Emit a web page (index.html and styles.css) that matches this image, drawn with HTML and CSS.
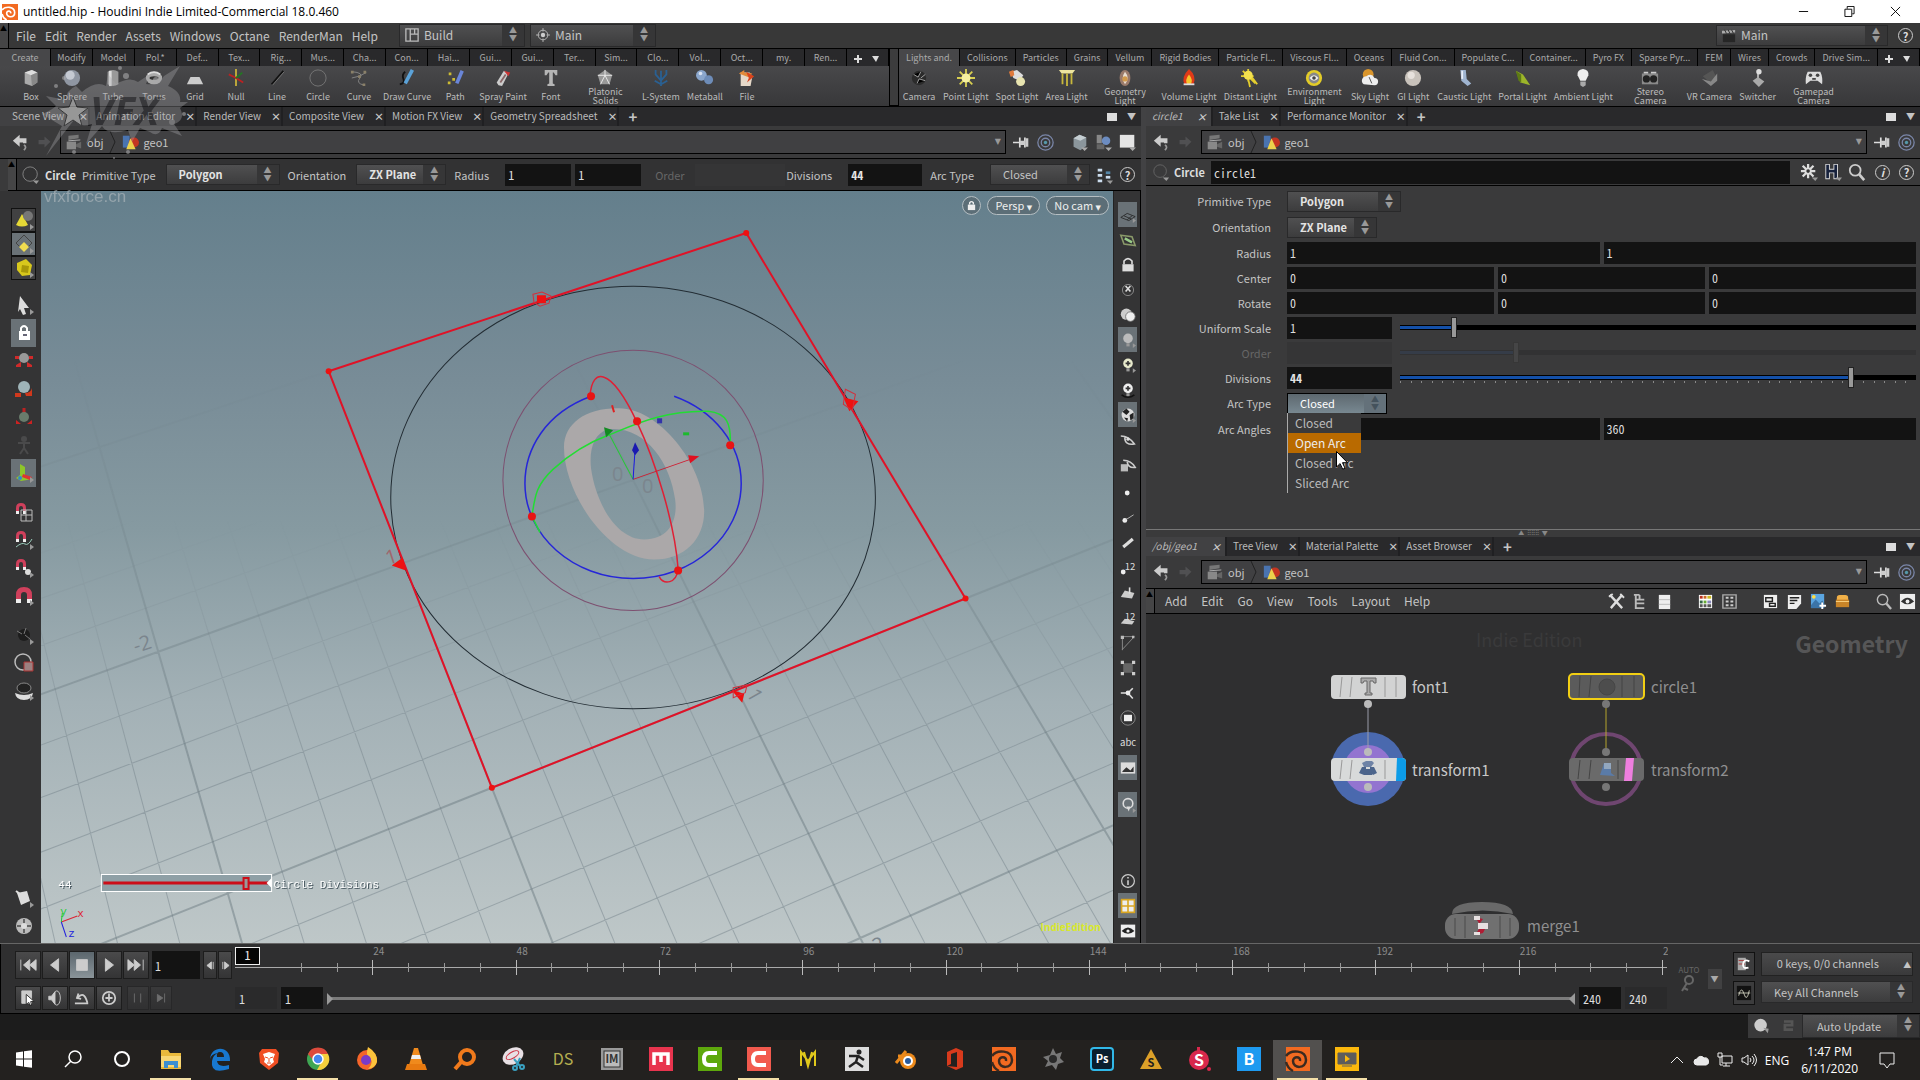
FILE: index.html
```html
<!DOCTYPE html>
<html lang="en">
<head>
  <meta charset="UTF-8">
  <title>untitled.hip - Houdini Indie Limited-Commercial 18.0.460</title>
  <meta name="viewport" content="width=device-width, initial-scale=1.0">
  <link rel="stylesheet" href="styles.css">
</head>
<body>
  <header class="titlebar">
    <svg class="app-logo" viewBox="0 0 24 24"><rect width="24" height="24" fill="#f26a21"/><path d="M0 9C5 3 19 3 19 13c0 8-12 8-12 1 0-5 7-4 6 0M0 15c1 4 3 7 7 9" fill="none" stroke="#fff" stroke-width="2.5"/></svg>
    <h1>untitled.hip - Houdini Indie Limited-Commercial 18.0.460</h1>
    <div class="window-buttons">
      <button aria-label="Minimize"><svg viewBox="0 0 12 12"><path d="M1 6h10"/></svg></button>
      <button aria-label="Restore"><svg viewBox="0 0 12 12"><path d="M1 3.500h7.500v8H1zM3.500 3V.5H11v8H9"/></svg></button>
      <button aria-label="Close"><svg viewBox="0 0 12 12"><path d="M1 1l10 10M11 1L1 11"/></svg></button>
    </div>
  </header>

  <nav class="menubar">
    <span class="grip">▲</span>
    <div class="menus">
      <button>File</button><button>Edit</button><button>Render</button><button>Assets</button><button>Windows</button><button>Octane</button><button>RenderMan</button><button>Help</button>
    </div>
    <div class="drop desk has-icon">
      <svg class="lead" viewBox="0 0 16 16"><path d="M1 1h14v14H1zM6 1v14M6 7h9M11 1v6" fill="none" stroke="#bbb" stroke-width="1.500"/></svg>
      <select aria-label="Desktop"><option>Build</option></select>
    </div>
    <div class="drop desk has-icon">
      <svg class="lead" viewBox="0 0 16 16"><circle cx="8" cy="8" r="5.500" fill="none" stroke="#bbb"/><circle cx="8" cy="8" r="2.500" fill="#ccc"/><path d="M8 0v4M8 12v4M0 8h4M12 8h4" stroke="#bbb"/></svg>
      <select aria-label="Radial menu"><option>Main</option></select>
    </div>
    <div class="drop take has-icon">
      <svg class="lead" viewBox="0 0 16 16"><path d="M1 6h14v9H1z" fill="#262626"/><path d="M0 2l15-1v3L0 5z" fill="#aaa"/><path d="M3 1l2 4M7 1l2 4M11 1l2 4" stroke="#222"/></svg>
      <select aria-label="Take"><option>Main</option></select>
    </div>
    <button class="round">?</button>
  </nav>

  <section class="shelves">
    <div class="shelf shelf-left">
      <div class="shelf-tabs" id="tabs-left"></div>
      <div class="tools" id="tools-left"></div>
    </div>
    <div class="shelf-split"></div>
    <div class="shelf shelf-right">
      <div class="shelf-tabs" id="tabs-right"></div>
      <div class="tools" id="tools-right"></div>
    </div>
  </section>

  <main class="panes">
    <section class="pane scene">
      <div class="pane-tabs" data-tabs="Scene View|Animation Editor|Render View|Composite View|Motion FX View|Geometry Spreadsheet"></div>
      <div class="path-bar" data-extra="1"></div>
      <form class="op-bar">
        <span class="grip">▲</span>
        <svg class="op-icon" viewBox="0 0 20 20"><circle cx="9" cy="9" r="8" fill="none" stroke="#888"/><path d="M12 16h7l-3 4z" fill="#999"/></svg>
        <b>Circle</b>
        <label for="bar-prim">Primitive Type</label>
        <div class="drop w114 strong"><select id="bar-prim"><option>Polygon</option></select></div>
        <label for="bar-ori">Orientation</label>
        <div class="drop w90 strong"><select id="bar-ori"><option>ZX Plane</option></select></div>
        <label for="bar-rad" class="roomy">Radius</label>
        <input id="bar-rad" class="w66" value="1"><input class="w66" aria-label="Radius y" value="1">
        <label class="off" for="bar-order">Order</label>
        <input id="bar-order" class="w90 blank" disabled>
        <label for="bar-div" class="push roomy">Divisions</label>
        <input id="bar-div" class="w74 strong" value="44">
        <label for="bar-arc" class="roomy">Arc Type</label>
        <div class="drop w100"><select id="bar-arc"><option>Closed</option></select></div>
        <svg class="op-icon" viewBox="0 0 20 20"><path d="M3 3h5v3H3zM3 9h5v3H3zM3 15h5v3H3z" fill="#cde"/><path d="M12 6h5v3h-5z" fill="#58a"/><path d="M12 11h5v3h-5z" fill="#cde"/><path d="M13 16h7l-3 4z" fill="#999"/></svg>
        <button type="button" class="round">?</button>
      </form>

      <div class="view-wrap">
        <div class="side-tools" id="side-left"></div>
        <div class="viewport">
          <svg class="canvas" viewBox="41 192 1072 751" preserveAspectRatio="xMidYMid slice">
            <defs>
              <linearGradient id="fadeMinor" x1="0" y1="520" x2="0" y2="760" gradientUnits="userSpaceOnUse"><stop offset="0" stop-color="#000"/><stop offset="1" stop-color="#fff"/></linearGradient>
              <linearGradient id="fadeMajor" x1="0" y1="360" x2="0" y2="760" gradientUnits="userSpaceOnUse"><stop offset="0" stop-color="#000"/><stop offset="1" stop-color="#fff"/></linearGradient>
              <mask id="maskMinor" maskUnits="userSpaceOnUse" x="41" y="192" width="1072" height="751"><rect x="41" y="192" width="1072" height="751" fill="url(#fadeMinor)"/></mask>
              <mask id="maskMajor" maskUnits="userSpaceOnUse" x="41" y="192" width="1072" height="751"><rect x="41" y="192" width="1072" height="751" fill="url(#fadeMajor)"/></mask>
            </defs>
            <g mask="url(#maskMinor)"><path id="grid-minor" stroke="#75848b" stroke-opacity=".5" fill="none"/></g>
            <g mask="url(#maskMajor)"><path id="grid-major" stroke="#66757c" stroke-opacity=".45" stroke-width="2" fill="none"/></g>
            <g class="axis-num">
              <text x="134" y="652" transform="rotate(-18 140 645)">-2</text>
              <text x="386" y="564" fill="#a0666c" transform="rotate(-18 393 558)">1</text>
              <text x="612" y="482">0</text><text x="642" y="494">0</text>
              <text x="748" y="702" transform="rotate(60 754 696)">1</text>
              <text x="872" y="952" transform="rotate(-18 877 945)">2</text>
            </g>

            <!-- letter mesh -->
            <path fill="#aba8a9" fill-rule="evenodd" d="M617 409c40-2 87 55 87 103 0 28-20 48-50 48-45 0-90-65-90-112 0-24 22-39 53-39zM608 430c-14 4-19 20-17 39 5 36 26 71 53 71 24 0 34-18 31-40-5-38-31-74-67-70z"/>

            <!-- circle geometry and bounds -->
            <ellipse cx="633" cy="498" rx="242" ry="211" fill="none" stroke="#222c33"/>
            <path d="M329 372L746 234 965 599 492 788z" fill="none" stroke="#e01227" stroke-width="2"/>
            <g fill="#ee1111"><circle cx="329" cy="372" r="3"/><circle cx="746" cy="234" r="3"/><circle cx="965" cy="599" r="3"/><circle cx="492" cy="788" r="3"/>
              <path d="M392 566l11-8 3 13zM843 398l15 4-9 10zM731 690l13 4-2 9zM537 296h9v8h-9z"/></g>
            <path d="M845 390l10 5-3 16-9-6zM733 688l14-3-2 8-12 5zM533 295l9-2 9 4-2 7-9 3-6-4z" fill="none" stroke="#d2303c"/>

            <!-- rotate and translate handles -->
            <circle cx="633" cy="481" r="130" fill="none" stroke="#7d5070"/>
            <path d="M591 397C545 414 525 450 525 484c0 52 48 95 108 95s108-43 108-95c0-40-28-73-67-87" fill="none" stroke="#2626d8" stroke-width="1.500"/>
            <path d="M540 533l-8-16c3-22 5-32 21-47 20-18 36-27 55-34 25-10 55-25 100-24 19 2 23 12 22 34" fill="none" stroke="#22dd33" stroke-width="1.500"/>
            <path d="M590 397c1-16 7-22 14-19 12 4 24 26 33 45 18 38 38 102 41 147-2 14-14 16-19 7" fill="none" stroke="#df2035" stroke-width="1.500"/>
            <path d="M633 480l60-21" stroke="#d01c30"/><path d="M688 456l11 1-9 7z" fill="#e01020"/>
            <path d="M633 480l-26-49" stroke="#22cc33"/><path d="M604 428l9 3-7 7z" fill="#128a22"/>
            <path d="M633 480l2-30" stroke="#1a1ae0"/><path d="M635 443l4 8-4 5-3-5z" fill="#1a1ab0"/>
            <path d="M612 406l2 7" stroke="#dd2222" stroke-width="2"/><path d="M657 419h5v5h-5z" fill="#33a" /><path d="M683 433h6v3h-6z" fill="#1cba2c"/>
            <g fill="#e81414"><circle cx="591" cy="397" r="4"/><circle cx="637" cy="422" r="4"/><circle cx="730" cy="446" r="4"/><circle cx="532" cy="517" r="4"/><circle cx="678" cy="571" r="4"/></g>

            <!-- slider readout -->
            <g class="hud">
              <text x="59" y="888">44</text>
              <path d="M102 874.500h170v17H102z" fill="#8fa0a6" stroke="#fff"/>
              <path d="M104 883h166" stroke="#cc0d18" stroke-width="3"/>
              <path d="M244 878h5v11h-5z" fill="#999" stroke="#cc0d18" stroke-width="2"/>
              <path d="M267 883l5-5v10z" fill="#fff"/>
              <text x="274" y="888">Circle Divisions</text>
            </g>
            <path d="M62 922l16-6" stroke="#d23"/><path d="M62 922l1-9" stroke="#2c3"/><path d="M62 922l5 15" stroke="#22d"/>
            <g class="gnomon"><text x="78" y="917" fill="#d23">x</text><text x="61" y="915" fill="#2c3">y</text><text x="69" y="937" fill="#22d">z</text></g>
            <text x="1040" y="931" class="edition">IndieEdition</text>
          </svg>
          <div class="pills">
            <button class="round" aria-label="Lock camera"><svg viewBox="0 0 12 12"><path d="M2 5h8v6H2z" fill="#eee"/><path d="M4 5V3q2-2.500 4 0v2" fill="none" stroke="#eee" stroke-width="1.500"/></svg></button>
            <button>Persp <i>▼</i></button>
            <button>No cam <i>▼</i></button>
          </div>
        </div>
        <div class="side-tools right" id="side-right"></div>
      </div>
    </section>

    <section class="pane side">
      <div class="pane-tabs" data-tabs="circle1|Take List|Performance Monitor"></div>
      <div class="path-bar"></div>
      <form class="params">
        <div class="param-head">
          <svg class="op-icon" viewBox="0 0 20 20"><circle cx="9" cy="9" r="7" fill="none" stroke="#666"/><path d="M12 16h7l-3 4z" fill="#999"/></svg>
          <label for="op-name"><b>Circle</b></label>
          <input id="op-name" value="circle1">
          <svg viewBox="0 0 20 20"><path d="M9 1v16M1 9h16M3 3l12 12M15 3L3 15" stroke="#ddd" stroke-width="2.500"/><circle cx="9" cy="9" r="4" fill="#ddd"/><circle cx="9" cy="9" r="2" fill="#333"/><path d="M13 16h7l-3 4z" fill="#999"/></svg>
          <svg viewBox="0 0 20 20"><path d="M4 1v17M13 1v17M4 9h9" stroke="#ddd" stroke-width="5"/><path d="M4 2v15M13 2v15M4 9h9" stroke="#16213c" stroke-width="3"/><path d="M13 16h7l-3 4z" fill="#999"/></svg>
          <svg viewBox="0 0 20 20"><circle cx="8" cy="8" r="6" fill="none" stroke="#ccc" stroke-width="2"/><path d="M12 12l6 7" stroke="#ccc" stroke-width="3"/></svg>
          <button type="button" class="round"><em>i</em></button>
          <button type="button" class="round">?</button>
        </div>
        <div class="row tall"><label for="p-prim">Primitive Type</label><div class="drop w114 strong"><select id="p-prim"><option>Polygon</option></select></div></div>
        <div class="row tall"><label for="p-ori">Orientation</label><div class="drop w90 strong"><select id="p-ori"><option>ZX Plane</option></select></div></div>
        <div class="row"><label for="p-rad">Radius</label><input id="p-rad" value="1"><input aria-label="Radius y" value="1"></div>
        <div class="row"><label for="p-cen">Center</label><input id="p-cen" value="0"><input aria-label="Center y" value="0"><input aria-label="Center z" value="0"></div>
        <div class="row"><label for="p-rot">Rotate</label><input id="p-rot" value="0"><input aria-label="Rotate y" value="0"><input aria-label="Rotate z" value="0"></div>
        <div class="row slide"><label for="p-scale">Uniform Scale</label><input id="p-scale" value="1"><input type="range" aria-label="Uniform scale slider" min="0" max="10" value="1"></div>
        <div class="row slide off"><label for="p-order">Order</label><input id="p-order" disabled><input type="range" aria-label="Order slider" min="2" max="11" value="4" disabled></div>
        <div class="row slide"><label for="p-div">Divisions</label><input id="p-div" class="strong" value="44"><input type="range" class="ticked" aria-label="Divisions slider" min="1" max="50" value="44"></div>
        <div class="row tall">
          <label for="p-arc">Arc Type</label>
          <div class="drop w100 open"><select id="p-arc"><option>Closed</option></select>
            <ul class="popup">
              <li><button type="button">Closed</button></li>
              <li><button type="button" class="hot">Open Arc</button></li>
              <li><button type="button">Closed Arc</button></li>
              <li><button type="button">Sliced Arc</button></li>
            </ul>
            <svg class="cursor" viewBox="0 0 12 19"><path d="M.5.500v15.500l3.600-3.400 2.600 5.600 2.300-1-2.500-5.500h5z" fill="#fff" stroke="#000"/></svg>
          </div>
        </div>
        <div class="row"><label for="p-ang">Arc Angles</label><input id="p-ang" value=""><input aria-label="Arc end" value="360"></div>
      </form>

      <div class="splitter">▲&nbsp; ⠿⠿⠿ &nbsp;▼</div>
      <div class="pane-tabs" data-tabs="/obj/geo1|Tree View|Material Palette|Asset Browser"></div>
      <div class="path-bar"></div>
      <nav class="net-menu">
        <span class="grip">▲</span>
        <div class="menus"><button>Add</button><button>Edit</button><button>Go</button><button>View</button><button>Tools</button><button>Layout</button><button>Help</button></div>
        <div class="net-icons">
          <svg viewBox="0 0 18 18"><path d="M2 2l13 14M15 2L3 16" stroke="#ddd" stroke-width="2.500"/><path d="M1 4l4-3M13 1l4 4" stroke="#ddd" stroke-width="2"/></svg>
          <svg viewBox="0 0 18 18"><path d="M2 2h6M4 2v14h9M4 7h9M4 11h9M8 2v4" stroke="#bbb" stroke-width="2" fill="none"/></svg>
          <svg viewBox="0 0 18 18"><path d="M3 2h12v15H3z" fill="#eee"/><path d="M3 7h12M3 12h12" stroke="#bbb"/></svg>
          <svg class="sep" viewBox="0 0 18 18"><path d="M2 2h14v14H2z" fill="#fff"/><path d="M3 3h3v3H3z" fill="#b32"/><path d="M7 3h3v3H7z" fill="#c62"/><path d="M11 3h4v3h-4z" fill="#cb2"/><path d="M3 8h3v3H3z" fill="#364"/><path d="M7 8h3v3H7z" fill="#6a3"/><path d="M11 8h4v3h-4z" fill="#88b"/><path d="M3 12h3v3H3zM7 12h3v3H7zM11 12h4v3h-4z" fill="#555"/></svg>
          <svg viewBox="0 0 18 18"><path d="M2 2h14v14H2z" fill="none" stroke="#aaa" stroke-width="1.500"/><path d="M5 5h3M10 5h3M5 9h3M10 9h3M5 13h3M10 13h3" stroke="#ccc" stroke-width="2"/></svg>
          <svg class="sep" viewBox="0 0 18 18"><path d="M2 2h14v14H2z" fill="#eee"/><path d="M4 5h7v4H4zM8 11h6v3H8z" fill="#eee" stroke="#222" stroke-width="1.500"/></svg>
          <svg viewBox="0 0 18 18"><path d="M2 2h14v9l-5 6H2z" fill="#eee"/><path d="M4 5h10M4 8h8M4 11h5" stroke="#222" stroke-width="1.500"/></svg>
          <svg viewBox="0 0 18 18"><path d="M1 1h14v15H1z" fill="#5ba5e0"/><path d="M1 13l5-6 4 4 3-3 2 3v5H1z" fill="#3b74a8"/><circle cx="4" cy="4" r="2" fill="#fd4"/><path d="M13 10v7M10 13.500h7" stroke="#fff" stroke-width="2"/></svg>
          <svg viewBox="0 0 18 18"><path d="M3 5q0-3 3-3h6q3 0 3 3v3H3z" fill="#f0b048"/><path d="M2 7h14v8H2z" fill="#c88428"/><path d="M2 9h14" stroke="#f8d080"/></svg>
          <svg class="sep" viewBox="0 0 18 18"><circle cx="8" cy="7" r="5.500" fill="none" stroke="#bbb" stroke-width="1.500"/><path d="M12 11l5 6" stroke="#bbb" stroke-width="2.500"/></svg>
          <svg viewBox="0 0 18 18"><path d="M1 1h16v16H1z" fill="#eee"/><path d="M2 9q7-8 14 0q-7 6-14 0z" fill="#333"/><circle cx="9" cy="9" r="2" fill="#eee"/></svg>
        </div>
      </nav>
      <div class="network">
        <svg viewBox="1146 614 774 329" preserveAspectRatio="xMinYMin slice">
          <text x="1476" y="647" class="ghost">Indie Edition</text>
          <text x="1908" y="653" text-anchor="end" class="context">Geometry</text>
          <circle cx="1368" cy="769" r="37" fill="#4a69ae"/><circle cx="1368" cy="769" r="24" fill="#9374d0"/>
          <circle cx="1606" cy="769" r="35" fill="none" stroke="#6f4670" stroke-width="4"/>
          <path d="M1368 706v45" stroke="#9a9ca8"/><path d="M1606 706v45" stroke="#b5a42c"/>
          <g fill="#bbb"><circle cx="1368" cy="704" r="4"/><circle cx="1368" cy="752" r="4"/><circle cx="1368" cy="787" r="4"/></g>
          <g fill="#777"><circle cx="1606" cy="704" r="4"/><circle cx="1606" cy="752" r="4"/><circle cx="1606" cy="787" r="4"/></g>
          <rect x="1331" y="675" width="75" height="24" rx="4" fill="#d2d3d3"/>
          <rect x="1331" y="758" width="75" height="23" rx="4" fill="#d8dada"/><path d="M1397 758h5q4 0 4 4v15q0 4-4 4h-6z" fill="#0c9ce8"/>
          <rect x="1569" y="674" width="75" height="25" rx="4" fill="#5b5b5b" stroke="#f2cf13" stroke-width="2"/>
          <rect x="1569" y="758" width="75" height="23" rx="4" fill="#6a6a6a"/><path d="M1626 758h8l-2 23h-8z" fill="#ee7fdf"/>
          <g stroke="#999" fill="none"><path d="M1342 677l-2 20M1352 677l-2 20M1385 677v20M1396 677v20M1342 760l-2 19M1352 760l-2 19M1385 760v19"/></g>
          <g stroke="#444" fill="none"><path d="M1580 676l-1 21M1591 676l-2 21M1622 676v21M1634 676v21M1580 760l-2 19M1591 760l-2 19M1618 760v19"/></g>
          <path d="M1361 678h15v5h-2l-1-2h-3v12h2v2h-7v-2h2v-12h-3l-1 2h-2z" fill="#aaa" stroke="#666"/>
          <circle cx="1607" cy="687" r="8" fill="#4d4d4d" stroke="#464646"/>
          <path d="M1359 773l3-6h4v5l-2 3zM1370 767h4l3 6-4 2-3-3zM1364 769h8v6h-8z" fill="#4c658c"/><path d="M1362 763l4-2h6l2 2-3 4h-7z" fill="#6e83a6"/>
          <path d="M1600 775l4-12 7 1v9l4 3z" fill="#5a7ba8"/><path d="M1604 763h7v6h-7z" fill="#93a7be"/>
          <path d="M1452 914q0-12 30-12t31 12q-30-7-61 0z" fill="#696969"/>
          <rect x="1445" y="914" width="74" height="25" rx="11" fill="#707070"/>
          <path d="M1455 918v18M1465 916v22M1500 916v22M1510 918v18" stroke="#4a4a4a"/>
          <path d="M1475 917l8 2-3 4 6 4-3 6-8 2 6-9z" fill="#b01c34"/><path d="M1474 916h6v4h-6zM1478 923h10v6h-10zM1474 932h6v3h-6z" fill="#e6e0e0"/>
          <g class="node-name"><text x="1412" y="693">font1</text><text x="1412" y="776">transform1</text></g>
          <g class="node-name dim"><text x="1651" y="693">circle1</text><text x="1651" y="776">transform2</text><text x="1527" y="932">merge1</text></g>
        </svg>
      </div>
    </section>
  </main>

  <footer class="playbar">
    <div class="play-left">
      <div class="btn-row">
        <button aria-label="First frame"><svg viewBox="0 0 20 14"><path d="M2 1v12M12 1v12L5 7zM19 1v12l-7-6z"/></svg></button>
        <button aria-label="Play backward"><svg viewBox="0 0 20 14"><path d="M14 0v14L5 7z"/></svg></button>
        <button aria-label="Stop" class="lit"><svg viewBox="0 0 20 14"><path d="M4 1h12v12H4z"/></svg></button>
        <button aria-label="Play"><svg viewBox="0 0 20 14"><path d="M6 0v14l9-7z"/></svg></button>
        <button aria-label="Last frame"><svg viewBox="0 0 20 14"><path d="M18 1v12M8 1v12l7-6zM1 1v12l7-6z"/></svg></button>
        <input class="frame" aria-label="Frame" value="1">
        <button class="thin" aria-label="Previous frame"><svg viewBox="0 0 10 10"><path d="M6 1v8L1 5zM8 1v8"/></svg></button>
        <button class="thin" aria-label="Next frame"><svg viewBox="0 0 10 10"><path d="M4 1v8l5-4zM2 1v8"/></svg></button>
      </div>
      <div class="btn-row low">
        <button aria-label="Global animation options"><svg viewBox="0 0 20 18"><path d="M3 1h11v14H3z"/><path d="M8 5l9 8h-4l1 4h-2l-1-3-3 2z" fill="#fff" stroke="#222"/></svg></button>
        <button aria-label="Audio"><svg viewBox="0 0 20 18"><path d="M3 7h3l4-5v14l-4-5H3z"/><ellipse cx="12" cy="9" rx="4" ry="8" fill="none"/></svg></button>
        <button aria-label="Loop mode"><svg viewBox="0 0 20 18"><path d="M2 15h15M4 10l2-6M4 9l5 1M5 9q7-9 11 5" fill="none" stroke-width="2"/></svg></button>
        <button aria-label="Real time"><svg viewBox="0 0 20 18"><circle cx="10" cy="9" r="7" fill="none" stroke-width="2"/><path d="M10 4v5h4M6 9h3M10 10v3" fill="none" stroke-width="2"/></svg></button>
        <button class="mid off" aria-label="Previous key" disabled><svg viewBox="0 0 20 14"><path d="M6 2v10M13 2v10"/></svg></button>
        <button class="off" aria-label="Next key" disabled><svg viewBox="0 0 20 14"><path d="M14 2v10M6 3l6 4-6 4z"/></svg></button>
      </div>
    </div>
    <div class="play-mid">
      <div class="timeline" id="timeline"><output class="flag">1</output></div>
      <div class="range-row">
        <input class="w42 flat" aria-label="Global start" value="1">
        <input class="w42" aria-label="Range start" value="1">
        <div class="range-track"></div>
        <input class="w42" aria-label="Range end" value="240">
        <input class="w42 flat" aria-label="Global end" value="240">
      </div>
    </div>
    <div class="autokey">
      <span>AUTO<svg viewBox="0 0 18 18"><circle cx="11" cy="5" r="4" fill="none" stroke="#666" stroke-width="2"/><path d="M9 8l-5 8M6 13l4 2" stroke="#666" stroke-width="2"/></svg></span>
      <button aria-label="Auto key menu">▼</button>
    </div>
    <div class="play-right">
      <button class="sq" aria-label="Scoped channels"><svg viewBox="0 0 18 18"><path d="M2 2h9v14H2z" fill="#aaa"/><path d="M3 5h7M3 9h7" stroke="#a33"/><path d="M15 6q-6-3-7 3t6 4" fill="none" stroke="#fff" stroke-width="2"/></svg></button>
      <button class="wide">0 keys, 0/0 channels <i>▲</i></button>
      <button class="sq" aria-label="Channel list"><svg viewBox="0 0 18 18"><path d="M1 1h16v16H1z" fill="#111"/><path d="M2 9h14M3 12q3-12 6-2t6-4" fill="none" stroke="#ccb"/></svg></button>
      <div class="drop"><select aria-label="Key scope"><option>Key All Channels</option></select></div>
    </div>
  </footer>
  <div class="status">
    <svg viewBox="0 0 20 20"><circle cx="9" cy="9" r="7" fill="#ccc"/><path d="M12 12l5 6 1-5z" fill="#999"/></svg>
    <svg viewBox="0 0 20 20"><path d="M5 5h9v4H6v5h9" fill="none" stroke="#555" stroke-width="3"/></svg>
    <div class="drop"><select aria-label="Update mode"><option>Auto Update</option></select></div>
  </div>

  <nav class="taskbar">
    <div class="apps" id="apps"></div>
    <div class="tray">
      <svg viewBox="0 0 16 16"><path d="M2 11l6-6 6 6"/></svg>
      <svg viewBox="0 0 16 16"><path d="M4 13a3 3 0 0 1 0-6 4 4 0 0 1 7-1 3 3 0 0 1 2 7z" fill="#e8e8e8"/></svg>
      <svg viewBox="0 0 16 16"><path d="M5 4h10v7H5zM9 11v3M6 14h7M1 1h4v4H1zM3 5v8h3"/></svg>
      <svg viewBox="0 0 16 16"><path d="M1 6h2l4-3v10l-4-3H1zM9 6q2 2 0 4M11 4q4 4 0 8M13 2q5 6 0 12"/></svg>
      <span>ENG</span>
      <time>1:47 PM<br>6/11/2020</time>
      <svg class="note" viewBox="0 0 18 18"><path d="M2 2h14v11h-4l-3 4-3-4H2z"/></svg>
    </div>
  </nav>

  <div class="stamp">
    <svg viewBox="0 0 150 100" fill="#a9a9ab">
      <path d="M4 50q10-4 14-8l-10-10 20 4q0-10 10-14l6 6q14-12 24-6l2-12 8 10q14-8 22-2l12-8-4 10q12 2 18-8l16-10-12 20q14 6 12 16l8 0-8 6q6 12-6 16l8 12-20-8q-4 10-12 4l-10-4-8 14-4-12q-20 6-26-4l-16 18 6-20q-12 4-18-4L8 92l16-30z" opacity=".6"/>
      <circle cx="118" cy="16" r="3"/><circle cx="82" cy="4" r="2"/><circle cx="88" cy="12" r="3"/><circle cx="134" cy="58" r="3"/><circle cx="36" cy="88" r="2"/><circle cx="146" cy="50" r="2"/><circle cx="18" cy="22" r="2"/><circle cx="90" cy="88" r="2"/><circle cx="26" cy="14" r="2"/><circle cx="76" cy="94" r="1"/>
      <path d="M35 33l4 10 11 1-9 7 3 11-9-6-9 6 3-11-9-7 11-1z" fill="#d0d0d0" stroke="#333"/>
      <text x="52" y="61">VFX</text>
    </svg>
    <span>vfxforce.cn</span>
  </div>

  <script src="script.js"></script>
</body>
</html>
```

FILE: styles.css
```css
* { box-sizing: border-box; }
body {
  margin: 0;
  min-height: 100vh;
  display: flex;
  flex-direction: column;
  background: #1c1c1c;
  color: #c4c4c4;
  font: 11px/16px "Noto Sans CJK SC", "Open Sans", sans-serif;
  overflow: hidden;
}
button, input, select {
  font: inherit;
  color: inherit;
  background: none;
  border: 0;
  padding: 0;
  margin: 0;
  min-width: 0;
}
svg { display: block; flex: none; }
b { color: #ddd; }

/* window title */
.titlebar {
  height: 23px;
  display: flex;
  align-items: center;
  background: #fff;
  color: #000;
  padding: 0 12px 0 2px;
}
.app-logo { width: 16px; height: 16px; }
.titlebar h1 {
  font: 12px/20px "Open Sans", sans-serif;
  margin: 0 auto 0 5px;
}
.window-buttons { display: flex; gap: 20px; }
.window-buttons button { width: 26px; display: flex; justify-content: center; }
.window-buttons svg { width: 11px; height: 11px; fill: none; stroke: #000; }

/* main menu */
.grip {
  width: 9px;
  align-self: stretch;
  flex: none;
  font-size: 7px;
  line-height: 10px;
  color: #000;
  background: #454546;
  border-right: 1px solid #000;
}
.menubar {
  height: 25px;
  display: flex;
  align-items: center;
  background: #383838;
  padding-right: 7px;
}
.menus { display: flex; gap: 9px; margin-left: 7px; font-size: 12px; }
.drop {
  position: relative;
  height: 21px;
  flex: none;
  background: linear-gradient(#505051, #3c3c3d);
  border: 1px solid #29292a;
}
.drop select {
  appearance: none;
  display: block;
  width: 100%;
  height: 100%;
  padding: 0 24px 1px 12px;
}
.drop::after {
  content: "▲\A▼";
  white-space: pre;
  position: absolute;
  right: 0;
  top: 0;
  bottom: 0;
  width: 22px;
  padding-top: 1px;
  text-align: center;
  font-size: 8px;
  line-height: 8px;
  color: #999;
  background: #363637;
  pointer-events: none;
}
.has-icon select { padding-left: 24px; font-size: 12px; }
.lead { position: absolute; left: 5px; top: 3px; width: 14px; height: 14px; pointer-events: none; }
.desk { width: 126px; margin-left: 5px; height: 23px; }
.menus + .desk { margin-left: 21px; }
.take { width: 172px; margin: 0 10px 0 auto; }
.round {
  width: 15px;
  height: 15px;
  flex: none;
  border: 1px solid #ccc;
  border-radius: 50%;
  font: bold 11px/12px "Noto Sans CJK SC", sans-serif;
  color: #ddd;
  text-align: center;
}
.w42 { width: 42px; }
.w66 { width: 66px; }
.w74 { width: 74px; }
.w90 { width: 90px; }
.w100 { width: 100px; }
.w114 { width: 114px; }

/* shelves */
.shelves { height: 59px; display: flex; border-bottom: 1px solid #000; }
.shelf { display: flex; flex-direction: column; min-width: 0; }
.shelf-left { flex: 889; }
.shelf-right { flex: 1021; }
.shelf-split { width: 10px; border: 1px solid #000; background: #3c3c3d; }
.shelf-tabs {
  height: 18px;
  display: flex;
  background: #242426;
  border-top: 1px solid #000;
  font-size: 9px;
  line-height: 18px;
}
.shelf-tabs button {
  flex: 1 1 auto;
  padding: 0 4px;
  background: #29292b;
  border-right: 1px solid #000;
  color: #aaa;
  overflow: hidden;
  white-space: nowrap;
}
#tabs-left button { flex: 1 1 0; }
#tabs-left .on { flex: none; width: 51px; }
.shelf-tabs .on { background: #474749; }
.shelf-tabs .plus, #tabs-left .plus { flex: none; width: 42px; color: #ddd; text-align: center; }
.plus svg { display: inline-block; width: 26px; height: 10px; vertical-align: middle; }
.tools { flex: 1; display: flex; background: linear-gradient(#48484a, #38383a); overflow: hidden; }
#tools-left { padding-left: 11px; }
.tool {
  min-width: 41px;
  flex: none;
  padding: 3px 4px 0 3px;
  display: flex;
  flex-direction: column;
  align-items: center;
  font-size: 9px;
  line-height: 9px;
  color: #bbb;
}
.tool.wide { width: 67px; padding: 3px 8px 0; }
.tool svg { width: 20px; height: 18px; overflow: visible; }
.tool span { height: 18px; display: flex; align-items: center; text-align: center; }

/* panes */
.panes {
  flex: 1;
  min-height: 0;
  display: grid;
  grid-template-columns: minmax(0, 1141fr) minmax(0, 779fr);
}
.pane { display: flex; flex-direction: column; min-height: 0; background: #3a3a3b; }
.side { border-left: 5px solid #424244; }
.pane-tabs {
  height: 19px;
  flex: none;
  display: flex;
  background: #29292b;
  font-size: 10px;
  line-height: 18px;
}
.pane-tabs .tab { display: flex; padding: 0 4px 0 6px; color: #bbb; border-right: 2px solid #202022; white-space: nowrap; }
.pane-tabs .tab.on { background: #414143; padding-right: 8px; }
.scene .tab.on { padding: 0 4px 0 12px; }
.side .tab.on { font-style: italic; }
.tab button { width: 6px; margin-left: 10px; font-size: 10px; font-weight: bold; color: #ccc; }
.tab.on button { margin-left: 14px; }
.pane-tabs .add { font-size: 15px; font-weight: bold; margin-left: 9px; }
.pane-tabs .max { width: 10px; height: 8px; background: #ddd; margin: 6px 10px 0 auto; }
.pane-tabs .arr { font-size: 9px; margin-right: 5px; }
.path-bar {
  height: 33px;
  flex: none;
  display: flex;
  align-items: center;
  gap: 7px;
  padding: 0 5px 0 7px;
  border-bottom: 1px solid #000;
}
.path-bar > svg { width: 17px; height: 17px; }
.scene .path-bar { padding-left: 12px; }
.scene .target { margin-right: 10px; }
.path {
  flex: 1;
  height: 24px;
  display: flex;
  align-items: center;
  gap: 5px;
  padding: 0 4px;
  border: 1px solid #000;
  background: #404042;
}
.path svg { width: 17px; height: 17px; }
.path .sepa { width: 8px; height: 22px; }
.path i { margin-left: auto; font: 8px/8px "DejaVu Sans", sans-serif; color: #999; }

.op-bar {
  height: 32px;
  flex: none;
  display: flex;
  align-items: center;
  margin-left: 8px;
  padding-right: 6px;
  border-bottom: 1px solid #000;
  background: #323233;
}
.op-bar label { margin: 0 10px 0 8px; white-space: nowrap; }
.op-bar b { margin-right: -2px; }
.op-bar .roomy { margin-right: 16px; }
.op-bar input + input { margin-left: 4px; }
.op-bar .off { margin-left: 14px; }
.op-bar .push { margin-left: auto; }
.op-bar .op-icon { margin: 0 5px; }
.op-bar .drop + .op-icon { margin-right: 7px; }
.op-icon { width: 18px; height: 20px; }
input:not([type="range"]) {
  height: 22px;
  padding: 0 3px;
  background: #131313;
  color: #ddd;
  font: 12px/20px "Noto Sans Mono CJK SC", "Liberation Mono", monospace;
}
.op-bar input.blank, .off input:not([type="range"]) { background: #353536; }
.strong select, input.strong:not([type="range"]) { font-weight: bold; color: #e4e4e4; }
.off { color: #666; }

/* 3d view */
.view-wrap { flex: 1; min-height: 0; display: flex; }
.side-tools {
  width: 41px;
  display: flex;
  flex-direction: column;
  padding: 17px 5px 3px 11px;
  background: #343435;
}
.side-tools button { height: 28px; flex: none; display: flex; align-items: center; justify-content: center; }
.side-tools button.cell { height: 24px; border: 1px solid #111; background: #414142; }
.side-tools button.on { background: #6a7277; }
.side-tools .gap { margin-top: 11px; }
.side-tools .last { margin-top: auto; }
.side-tools svg { width: 20px; height: 20px; overflow: visible; }
.side-tools.right { width: 28px; padding: 11px 3px 0 4px; border-left: 1px solid #222; border-right: 1px solid #000; }
.side-tools.right button { height: 25px; }
.side-tools.right svg { width: 16px; height: 16px; }
.side-tools.right .gap2 { margin-top: 3px; }
.side-tools.right .gap { margin-top: 12px; }
.side-tools text { font: 12px "Noto Sans CJK SC", sans-serif; fill: #ddd; }
.viewport {
  flex: 1;
  position: relative;
  overflow: hidden;
  background: linear-gradient(#647f8c, #788c97 25%, #869aa1 45%, #a3b1b6 68%, #bec7c8);
}
.canvas { position: absolute; width: 100%; height: 100%; }
.axis-num { font: 20px "Open Sans", sans-serif; fill: #7b858d; }
.hud { font: 11px "Liberation Mono", monospace; fill: #fff; }
.hud text { filter: drop-shadow(1px 1px 0 #4a5a62); }
.gnomon { font: 11px "Liberation Mono", monospace; }
.edition { font: bold 10px "Open Sans", sans-serif; fill: #d8e82c; }
.pills { position: absolute; top: 5px; right: 4px; display: flex; gap: 6px; align-items: center; }
.pills button {
  height: 19px;
  padding: 0 7px;
  border: 1px solid #b5bec2;
  border-radius: 10px;
  background: #5c6e77;
  color: #eee;
  line-height: 15px;
}
.pills .round { width: 19px; padding: 3px; }
.pills svg { width: 11px; height: 11px; }
.pills i { font: 7px/10px "DejaVu Sans", sans-serif; }

/* parameters */
.params { display: flex; flex-direction: column; padding-bottom: 88px; }
.param-head {
  height: 27px;
  display: flex;
  align-items: center;
  gap: 6px;
  padding: 0 6px;
  border-bottom: 1px solid #000;
  margin-bottom: 2px;
}
.param-head svg { width: 18px; height: 18px; }
.param-head label { margin-left: -2px; }
.param-head input { flex: 1; height: 23px; margin-right: 4px; }
.param-head .round { margin-left: 3px; }
.row { display: flex; align-items: center; gap: 4px; height: 25px; padding-right: 4px; }
.row.tall { height: 26px; }
.row label { width: 125px; margin-right: 12px; text-align: right; flex: none; }
.row input:not([type="range"]) { flex: 1; }
.row.slide input:not([type="range"]) { flex: none; width: 105px; }
.row input[type="range"] {
  --fill: 0%;
  appearance: none;
  flex: 1;
  height: 22px;
  margin-left: 4px;
  background:
    linear-gradient(#1450a8, #1450a8) 0 9px / var(--fill) 3px no-repeat,
    linear-gradient(#000, #000) 0 8px / 100% 5px no-repeat;
}
.row input.ticked {
  background:
    linear-gradient(#1450a8, #1450a8) 0 9px / var(--fill) 3px no-repeat,
    linear-gradient(#000, #000) 0 8px / 100% 5px no-repeat,
    repeating-linear-gradient(90deg, #888 0 1px, transparent 1px calc(100% / 49)) 0 14px / 100% 2px no-repeat;
}
.row input[type="range"]::-webkit-slider-thumb {
  appearance: none;
  width: 6px;
  height: 21px;
  background: #999;
  border: 1px solid #222;
}
.row.off input[type="range"] { opacity: 0.12; }
.drop.open { background: linear-gradient(#5d686f, #788891); border-color: #000; color: #fff; }
.drop.open::after { background: #64717a; color: #44525c; }
.popup {
  position: absolute;
  z-index: 2;
  left: -1px;
  top: 19px;
  width: 74px;
  margin: 0;
  padding: 0;
  list-style: none;
  background: #3a3a3b;
  border-left: 1px solid #aaa;
}
.popup button { width: 100%; height: 20px; padding-left: 7px; text-align: left; font-size: 12px; line-height: 18px; color: #bbb; }
.popup .hot { background: #b96a00; color: #eee; }
.cursor { position: absolute; z-index: 3; left: 48px; top: 57px; width: 12px; height: 19px; }

.splitter {
  height: 8px;
  flex: none;
  border-top: 1px solid #777;
  text-align: center;
  font-size: 6px;
  line-height: 6px;
  color: #888;
}
.net-menu { height: 25px; flex: none; display: flex; align-items: center; border-bottom: 1px solid #000; }
.net-menu .menus { gap: 14px; margin-left: 10px; }
.net-icons { margin-left: auto; display: flex; gap: 7px; padding-right: 4px; }
.net-icons svg { width: 17px; height: 17px; }
.net-icons .sep { margin-left: 17px; }
.network { flex: 1; min-height: 0; background: #2f2f30; }
.network svg { width: 100%; height: 100%; }
.ghost { font-size: 18px; fill: #3a3a3b; }
.context { font-size: 23px; font-weight: bold; fill: #565657; }
.node-name { font-size: 15px; fill: #c8c8c8; }
.dim { fill: #909090; }

/* playbar */
.playbar {
  height: 71px;
  display: flex;
  padding-right: 7px;
  background: #2f2f30;
  border-top: 1px solid #666;
  border-bottom: 1px solid #000;
}
.play-left { width: 235px; flex: none; padding: 7px 0 0 14px; border-left: 1px solid #000; }
.btn-row { display: flex; gap: 1px; height: 28px; }
.btn-row.low { height: 24px; margin-top: 7px; }
.btn-row button {
  width: 26px;
  display: flex;
  align-items: center;
  justify-content: center;
  background: linear-gradient(#4a4a4b, #343435);
  border: 1px solid #1d1d1d;
}
.btn-row button.thin { width: 14px; }
.btn-row button.lit { background: linear-gradient(#5b666d, #8a9499); }
.btn-row button.off { width: 22px; opacity: 0.4; }
.btn-row .mid { margin-left: 4px; }
.btn-row svg { width: 18px; height: 16px; fill: #ccc; stroke: #ccc; }
.btn-row .thin svg { width: 9px; height: 9px; }
.btn-row .frame { width: 48px; height: 28px; margin: 0 2px; }
.play-mid { flex: 1; min-width: 0; }
.timeline { position: relative; height: 37px; margin-right: 5px; }
.timeline::before { content: ""; position: absolute; left: 0; right: -5px; top: 23px; height: 1px; background: #aaa; }
.tick { position: absolute; top: 19px; height: 9px; border-left: 1px solid #999; }
.tick.major { top: 16px; height: 15px; border-color: #bbb; }
.tick span { position: absolute; bottom: 17px; left: 0; font-size: 10px; line-height: 14px; color: #8d8d8d; }
.tick:last-child span { width: 5px; overflow: hidden; }
.flag {
  position: absolute;
  z-index: 1;
  left: 0;
  top: 3px;
  width: 25px;
  height: 18px;
  border: 1px solid #eee;
  background: #050505;
  color: #eee;
  text-align: center;
  font: 12px/14px "Noto Sans Mono CJK SC", monospace;
}
.range-row { display: flex; align-items: center; gap: 4px; padding-top: 6px; }
.range-row input.flat { background: #2a2a2b; }
.range-row input { padding-left: 4px; }
.range-track { flex: 1; height: 3px; background: #7b7b7b; position: relative; }
.range-track::before, .range-track::after {
  content: "";
  position: absolute;
  top: -4px;
  border: 6px solid transparent;
}
.range-track::before { left: 0; border-left-color: #999; border-right: 0; }
.range-track::after { right: 0; border-right-color: #999; border-left: 0; }
.autokey { width: 66px; display: flex; align-items: center; justify-content: center; gap: 8px; color: #666; font-size: 8px; line-height: 10px; }
.autokey svg { width: 18px; height: 18px; }
.autokey button { width: 14px; height: 20px; background: #414142; color: #aaa; }
.play-right {
  width: 180px;
  flex: none;
  display: grid;
  grid-template-columns: 22px 1fr;
  grid-auto-rows: 24px;
  gap: 5px 6px;
  padding-top: 8px;
}
.play-right .sq { border: 1px solid #111; background: #3c3c3d; padding: 2px; }
.play-right .sq svg { width: 16px; height: 18px; }
.play-right .wide { background: linear-gradient(#4a4a4b, #3a3a3b); border: 1px solid #222; padding-left: 14px; line-height: 20px; }
.wide i { margin-left: 22px; font-size: 8px; font-style: normal; }
.play-right .drop { height: 22px; }
.status { height: 26px; display: flex; justify-content: flex-end; }
.status svg { width: 27px; height: 24px; padding: 3px; background: #39393a; }
.status .drop { width: 118px; height: 24px; }
.status select { padding-left: 14px; }

/* windows taskbar */
.taskbar {
  height: 40px;
  display: flex;
  background: #23211f;
  color: #fff;
  font: 12px/17px "Open Sans", sans-serif;
}
.apps { display: flex; }
.apps button {
  width: 49px;
  display: flex;
  align-items: center;
  justify-content: center;
  border-bottom: 2px solid transparent;
}
.apps button:first-child { width: 48px; }
.apps .run { border-image: linear-gradient(90deg, transparent 10%, #f4e0a8 10% 90%, transparent 90%) 1; }
.apps .now { background: #52504e; }
.apps svg { width: 24px; height: 24px; overflow: visible; }
.apps text { font: 16px "Noto Sans CJK SC", sans-serif; text-anchor: middle; }
.apps .heavy { font-weight: bold; }
.apps .small { font-size: 11px; }
.tray { margin-left: auto; padding-right: 24px; display: flex; align-items: center; gap: 8px; }
.tray svg { width: 16px; height: 16px; fill: none; stroke: #eee; }
.tray time { text-align: center; margin: 0 12px 0 4px; }
.tray .note { width: 18px; height: 18px; }

/* channel stamp over the top left corner */
.stamp { position: absolute; z-index: 5; left: 38px; top: 64px; width: 150px; pointer-events: none; color: #b4bcc0; }
.stamp svg { width: 150px; height: 100px; opacity: 0.6; }
.stamp text { font: italic bold 40px "Open Sans", sans-serif; fill: #39393c; }
.stamp span { display: block; margin: 22px 0 0 6px; font: 17px/22px "Liberation Sans", sans-serif; opacity: 0.6; }
```

FILE: script.js
```js
const $ = id => document.getElementById(id);
const svg = (body, box = "0 0 20 20", cls = "") => `<svg class="${cls}" viewBox="${box}">${body}</svg>`;

// shelf icons, 20x20
const art = {
  Box: '<path d="M3 4l8-3 6 3v11l-6 4-8-3z" fill="#aaa"/><path d="M3 4l8-3 6 3-7 3z" fill="#ddd"/><path d="M10 7l7-3v11l-6 4z" fill="#888"/>',
  Sphere: '<circle cx="10" cy="10" r="9" fill="#8f96a2"/><circle cx="8" cy="7" r="5" fill="#c4c9d2"/>',
  Tube: '<path d="M4 3q6-4 12 0v14q-6 4-12 0z" fill="#999"/><path d="M7 2v17" stroke="#ddd" stroke-width="3"/>',
  Torus: '<ellipse cx="10" cy="10" rx="9" ry="7" fill="#aaa"/><ellipse cx="10" cy="10" rx="5" ry="2" fill="#333"/><path d="M3 6q7-5 14 0" stroke="#ddd" stroke-width="2" fill="none"/>',
  Grid: '<path d="M5 9h10l4 8H1z" fill="#ccc"/>',
  Null: '<path d="M10 0v19" stroke="#c9b13a" stroke-width="2"/><path d="M2 6l8 4 8 5" stroke="#b22" stroke-width="2"/><path d="M10 10l7-6" stroke="#272" stroke-width="2"/>',
  Line: '<path d="M4 17L17 2" stroke="#111" stroke-width="2"/><path d="M5 18L18 3" stroke="#777"/>',
  Circle: '<circle cx="10" cy="10" r="9" fill="none" stroke="#777"/>',
  Curve: '<path d="M2 3q14 1 9 7t5 8M2 10l8-2 8-4" stroke="#888" fill="none"/><path d="M1 2h3v3H1zM15 2h3v3h-3zM9 7h3v3H9zM14 16h3v3h-3z" fill="#8a8068"/>',
  "Draw Curve": '<path d="M8 3Q4 6 6 11t-4 6" stroke="#111" stroke-width="2" fill="none"/><path d="M16 1L8 16" stroke="#5ba2d8" stroke-width="4"/>',
  Path: '<path d="M3 4h3v3H3zM7 10h3v3H7zM2 14h3v3H2z" fill="#cb3"/><path d="M18 2l-6 14" stroke="#6a86d8" stroke-width="4"/>',
  "Spray Paint": '<path d="M5 18l-2-3L11 2l5 3-7 14z" fill="#ccc"/><path d="M11 2l7 2-2 4z" fill="#c33"/><path d="M7 15l6-9" stroke="#866" stroke-width="2"/>',
  Font: '<path d="M3 1h14v6h-2l-2-3h-1v12l2 1v2H6v-2l2-1V4H7L5 7H3z" fill="#b5b5b5"/>',
  "Platonic Solids": '<path d="M10 1l8 6-3 10H5L2 7z" fill="#999"/><path d="M10 1v6L5 17M10 7l8 0M10 7L2 7M10 7l5 10" stroke="#eee" fill="none"/>',
  "L-System": '<path d="M10 19V2M10 13L4 6V1M10 13l6-7V1M10 17l-7-4M10 17l7-4" stroke="#2a6092" stroke-width="2" fill="none"/>',
  Metaball: '<circle cx="6" cy="7" r="6" fill="#8aa6cc"/><circle cx="14" cy="12" r="5" fill="#6d8cb8"/><circle cx="5" cy="5" r="2" fill="#d8e2f2"/>',
  File: '<path d="M3 4h10l3 4-2 11H3z" fill="#e6d8c8"/><path d="M1 5l6-4v3l9 1-5 4z" fill="#e28a3a"/><path d="M9 3l9 5-8 7 2-5z" fill="#d9431c"/>',
  Camera: '<circle cx="10" cy="10" r="8" fill="#2b2b2b"/><path d="M4 6l5 3 3-6M8 16l2-5 7 2M12 10l5-4" stroke="#aaa"/>',
  "Point Light": '<path d="M10 0v20M0 10h20M3 3l14 14M17 3L3 17" stroke="#d8cf50" stroke-width="2"/><circle cx="10" cy="10" r="5" fill="#f5f0a0"/>',
  "Spot Light": '<path d="M3 3l7-2 7 6-4 6-7-3z" fill="#ddd"/><path d="M1 3l5-2 1 6-4 2z" fill="#e07a3c"/><circle cx="14" cy="14" r="5" fill="#e8e4b0"/>',
  "Area Light": '<path d="M1 1h18l-3 4H4z" fill="#eee6a0"/><path d="M5 5v12M10 5v14M15 5v12" stroke="#c8b83c" stroke-width="2"/>',
  "Geometry Light": '<ellipse cx="10" cy="10" rx="6" ry="9" fill="#9a7a6a"/><path d="M10 3q6 7 0 14q-5-7 0-14z" fill="#e8ddd0"/><circle cx="10" cy="11" r="3" fill="#d29a4c"/>',
  "Volume Light": '<path d="M10 0q9 8 5 17H5Q1 9 10 0z" fill="#e03a18"/><path d="M10 6q5 6 2 11H8q-3-5 2-11z" fill="#f6c52c"/><path d="M4 17h12" stroke="#ddd" stroke-width="2"/>',
  "Distant Light": '<path d="M2 2l14 14M8 0v14M0 8h14M12 9l6 8M8 11l2 9" stroke="#e5cf2e" stroke-width="2"/><circle cx="8" cy="7" r="5" fill="#f3e14e"/>',
  "Environment Light": '<circle cx="10" cy="10" r="9" fill="#e3cc28"/><circle cx="10" cy="10" r="6" fill="#888"/><path d="M5 10q5-6 10 0q-5 6-10 0z" fill="#eee"/><circle cx="10" cy="10" r="2" fill="#444"/>',
  "Sky Light": '<circle cx="8" cy="6" r="6" fill="#d9952c"/><path d="M3 17a5 5 0 0 1 3-9q6-4 9 2a4 4 0 0 1 0 8z" fill="#eee"/><path d="M9 9l3 7" stroke="#444"/>',
  "GI Light": '<ellipse cx="10" cy="10" rx="9" ry="9" fill="#c8c2bb"/><circle cx="8" cy="7" r="4" fill="#e6e1dc"/>',
  "Caustic Light": '<path d="M6 1h6l1 10 5 5-4 3-7-6z" fill="#9fb4d0"/><path d="M8 2v9" stroke="#e8eef8" stroke-width="2"/>',
  "Portal Light": '<path d="M2 2l8 4 8 12-11-3z" fill="#9cb52a"/><path d="M2 2l3 11 3 2V6z" fill="#5d7a14"/>',
  "Ambient Light": '<path d="M10 0q7 1 6 7l-3 6H7L4 7q-1-6 6-7z" fill="#eee"/><path d="M7 14h6v4l-3 2-3-2z" fill="#aaa"/>',
  "Stereo Camera": '<path d="M1 5h18v12H1z" fill="#8a8a8a"/><circle cx="6" cy="11" r="4" fill="#222"/><circle cx="14" cy="11" r="4" fill="#222"/><path d="M3 3h5v2H3zM11 3h6v2h-6z" fill="#ccc"/>',
  "VR Camera": '<path d="M2 8l11-7 4 8-7 6z" fill="#555"/><path d="M1 11l10 3 7-9v8l-7 6z" fill="#888"/>',
  Switcher: '<path d="M10 1v12" stroke="#bbb" stroke-width="2"/><circle cx="11" cy="3" r="3" fill="#ddd"/><path d="M4 13l6-4 7 5-6 6z" fill="#aaa"/>',
  "Gamepad Camera": '<path d="M3 3h14q3 6 2 14l-5-4H6l-5 4Q0 9 3 3z" fill="#ddd"/><circle cx="6" cy="7" r="2" fill="#444"/><circle cx="14" cy="7" r="2" fill="#444"/><path d="M8 11h4" stroke="#444" stroke-width="2"/>'
};
const wide = ["Platonic Solids", "Geometry Light", "Environment Light", "Stereo Camera", "Gamepad Camera"];

function fillShelf(side, tabs, tools) {
  $("tabs-" + side).innerHTML = tabs.map((t, i) => `<button class="${i ? "" : "on"}">${t}</button>`).join("") +
    `<button class="plus" aria-label="Add shelf">${svg('<path d="M4 1v8M0 5h8" stroke="#ddd" stroke-width="2"/><path d="M18 2h7l-3 6z" fill="#ddd"/>', "0 0 26 10")}</button>`;
  $("tools-" + side).innerHTML = tools.map(t =>
    `<button class="tool${wide.includes(t) ? " wide" : ""}">${svg(art[t])}<span>${t}</span></button>`).join("");
}
fillShelf("left",
  ["Create", "Modify", "Model", "Pol.*", "Def...", "Tex...", "Rig...", "Mus...", "Cha...", "Con...", "Hai...", "Gui...", "Gui...", "Ter...", "Sim...", "Clo...", "Vol...", "Oct...", "my.", "Ren..."],
  ["Box", "Sphere", "Tube", "Torus", "Grid", "Null", "Line", "Circle", "Curve", "Draw Curve", "Path", "Spray Paint", "Font", "Platonic Solids", "L-System", "Metaball", "File"]);
fillShelf("right",
  ["Lights and.", "Collisions", "Particles", "Grains", "Vellum", "Rigid Bodies", "Particle Fl...", "Viscous Fl...", "Oceans", "Fluid Con...", "Populate C...", "Container...", "Pyro FX", "Sparse Pyr...", "FEM", "Wires", "Crowds", "Drive Sim..."],
  ["Camera", "Point Light", "Spot Light", "Area Light", "Geometry Light", "Volume Light", "Distant Light", "Environment Light", "Sky Light", "GI Light", "Caustic Light", "Portal Light", "Ambient Light", "Stereo Camera", "VR Camera", "Switcher", "Gamepad Camera"]);

// pane tabs and path bars
document.querySelectorAll(".pane-tabs").forEach(bar => {
  bar.innerHTML = bar.dataset.tabs.split("|").map((t, i) =>
    `<div class="tab${i ? "" : " on"}">${t}<button aria-label="Close tab">×</button></div>`).join("") +
    '<button class="add" aria-label="Add tab">+</button><button class="max" aria-label="Maximize"></button><button class="arr" aria-label="Pane menu">▼</button>';
});
const back = svg('<path d="M1 8l8-7v4h8v6h-4v-1H9v5z" fill="#ccc"/><path d="M14 13q4 2 0 6" stroke="#999" fill="none" stroke-width="2"/>');
const fwd = svg('<path d="M17 9l-7-6v4H3v5h7v4z" fill="#505052"/>');
document.querySelectorAll(".path-bar").forEach(bar => {
  bar.innerHTML = back + fwd + `<div class="path">
    ${svg('<path d="M4 2l12-1v4L4 7z" fill="#777"/><path d="M2 9h11v9H2z" fill="#888"/><path d="M13 12l6-3v8l-6-2z" fill="#666"/><path d="M4 8l14-1" stroke="#bbb"/>')}<span>obj</span>
    ${svg('<path d="M1 0l5 11-5 11" stroke="#222" fill="none"/>', "0 0 8 22", "sepa")}
    ${svg('<path d="M1 2h8v14H1z" fill="#4a74b0"/><circle cx="14" cy="10" r="6" fill="#c33522"/><path d="M10 5l6 13H5z" fill="#ecd24c"/>')}<span>geo1</span><i>▼</i></div>
    ${svg('<path d="M0 10h7M8 4v12M14 4v12" stroke="#ddd" stroke-width="2"/><path d="M8 8h6v5H8zM15 5h3v10h-3z" fill="#ccc"/>')}
    ${svg('<circle cx="10" cy="10" r="9" fill="none" stroke="#7a86a8" stroke-width="1.500"/><circle cx="10" cy="10" r="5" fill="none" stroke="#7a86a8" stroke-width="1.500"/><circle cx="10" cy="10" r="2" fill="#59a"/>', "0 0 20 20", "target")}` +
    (bar.dataset.extra ? svg('<path d="M3 5l7-4 8 3v10l-7 5-8-4z" fill="#8b969c"/><path d="M3 5l7-4 8 3-7 4z" fill="#c5ced2"/><path d="M12 16h8l-4 4z" fill="#aaa"/>') +
      svg('<path d="M2 1h6v10H2z" fill="#888"/><circle cx="13" cy="8" r="5" fill="#6c8cc0"/><path d="M2 12h9v6H2z" fill="#666"/><path d="M12 16h8l-4 4z" fill="#aaa"/>') +
      svg('<path d="M1 1h17v15H1z" fill="#e4e4e4"/><path d="M12 16h8l-4 4z" fill="#aaa"/>') : "");
});

// toolbars beside the view: [classes, name, drawing]
const magnet = '<path d="M2 11V6q0-5 5-5t5 5v5H9V6q0-2-2-2T5 6v5z" fill="#d0405c"/><path d="M2 9h3v3H2zM9 9h3v3H9z" fill="#eee"/>';
const tri = '<path d="M16 14l4 3-4 3z" fill="#999"/>';
const left = [
  ["cell", "Objects", '<path d="M2 15L8 4l6 11q-6 3-12 0z" fill="#e5d836"/><circle cx="14" cy="6" r="5" fill="#777"/>' + tri],
  ["cell on", "Geometry", '<path d="M10 1l8 8-8 8-8-8z" fill="none" stroke="#444"/><path d="M10 8l5 5-5 5-5-5z" fill="#f0dc50"/>' + tri],
  ["cell", "Dynamics", '<path d="M3 5l9-4 6 6-2 10-8 1-5-6z" fill="#d8c81c"/><path d="M8 7l7 1-1 7-7-1z" fill="#a89808"/>' + tri],
  ["gap", "Select", '<path d="M6 1l9 12-5 0 2 6-3 1-3-6-2 3z" fill="#ddd"/>' + tri],
  ["on", "Secure selection", '<path d="M5 8h11v9H5z" fill="#fff"/><path d="M7 8V5q3-4 6 0v3" fill="none" stroke="#fff" stroke-width="2"/><path d="M9 11h4v2H9z" fill="#667"/>'],
  ["", "Move", '<circle cx="10" cy="7" r="5" fill="#999"/><path d="M1 5h4v3H1zM15 5h4v3h-4zM2 14l5-3v5H2zM13 11l5 3v2h-5z" fill="#d02a2a"/>'],
  ["", "Rotate", '<circle cx="10" cy="8" r="6" fill="#9fb4b8"/><path d="M1 14h6v4H1zM11 14q6 0 7-5v8h-6z" fill="#d0381c"/>'],
  ["", "Scale", '<path d="M10 1v6" stroke="#b22" stroke-width="3"/><circle cx="10" cy="10" r="5" fill="#697c6c"/><path d="M2 13l5 4H2zM18 13l-5 4h5z" fill="#c22"/>'],
  ["", "Pose", '<circle cx="10" cy="4" r="3" fill="#4a4a4b"/><path d="M4 8h12M10 7v6l-4 6M10 13l4 6" stroke="#4a4a4b" stroke-width="2" fill="none"/>'],
  ["on", "Handles", '<path d="M6 1l5 3v10l8 2-12 2-5-3 4-3z" fill="#8ec52a"/><path d="M9 11l9 3-2 3-8-3z" fill="#d33"/><circle cx="6" cy="15" r="2" fill="#38c"/>' + tri],
  ["gap", "Snap grid", magnet + '<path d="M7 8h11v11H7zM12 8v11M7 13h11" fill="none" stroke="#bbb"/>'],
  ["", "Snap curve", magnet + '<path d="M2 17q6-5 9-3t7-5" fill="none" stroke="#9cb"/>' + tri],
  ["", "Snap point", magnet + '<circle cx="14" cy="14" r="3" fill="#ddd"/>' + tri],
  ["", "Snap multi", '<path d="M2 16V9q0-8 8-8t8 8v7h-5V9q0-3-3-3T7 9v7z" fill="#d0405c"/><path d="M2 13h5v4H2zM13 13h5v4h-5z" fill="#eee"/>' + tri],
  ["gap", "Shading", '<circle cx="10" cy="10" r="6" fill="#1d1d1d"/><path d="M3 6l5 3M12 3l-2 6M16 14l-5-4" stroke="#777"/>' + tri],
  ["", "Region", '<circle cx="9" cy="9" r="8" fill="none" stroke="#bbb" stroke-width="1.500"/><path d="M10 9h9v9h-9z" fill="#9c8080" stroke="#a33"/>'],
  ["", "Light dome", '<ellipse cx="10" cy="7" rx="7" ry="5" fill="#222" stroke="#888"/><path d="M1 12q9 4 18 0-1 7-9 7t-9-7z" fill="#ddd"/>' + tri],
  ["last", "Flipbook", '<path d="M3 5l10-2 3 10-9 4z" fill="#ddd"/><path d="M2 3l4 3" stroke="#ddd" stroke-width="2"/>' + tri],
  ["", "Render", '<circle cx="10" cy="10" r="8" fill="#bbb"/><path d="M10 3v14M3 10h14" stroke="#666" stroke-width="2"/><circle cx="10" cy="10" r="3" fill="#ddd"/>']
];
const bulb = c => `<circle cx="10" cy="8" r="6" fill="${c}"/><path d="M8 14h4v4H8z" fill="#999"/>`;
const right = [
  ["on", "Reference plane", '<path d="M1 13l8-5 10 4-8 5z" fill="none" stroke="#222"/><path d="M5 11l9 4M9 16l6-5" stroke="#222"/>' + tri],
  ["", "Construction plane", '<path d="M1 4l14 2 4 11-14-2z" fill="none" stroke="#8a9a6a" stroke-width="2"/><path d="M6 8l9 5" stroke="#9c8" stroke-width="3"/>'],
  ["", "Lock", '<path d="M3 9h14v9H3z" fill="#ddd"/><path d="M5 9V5q5-6 10 0v4" fill="none" stroke="#ddd" stroke-width="2"/>'],
  ["", "Hide other", '<circle cx="10" cy="10" r="7" fill="none" stroke="#999"/><path d="M7 5l6 7M13 5l-6 7" stroke="#ddd" stroke-width="2"/>'],
  ["", "Ghost", '<circle cx="8" cy="9" r="7" fill="#ccc"/><circle cx="13" cy="12" r="6" fill="#eee" stroke="#666"/>'],
  ["on", "Headlight", bulb("#bbb") + tri],
  ["", "Normal light", bulb("#e8eacc") + '<path d="M10 5v6M7 8h6" stroke="#333" stroke-width="2"/>' + tri],
  ["", "High quality light", bulb("#eee") + '<path d="M10 5v6M7 8h6" stroke="#333" stroke-width="2"/><path d="M2 16q8 6 16 0" stroke="#111" stroke-width="2" fill="none"/>'],
  ["on", "Materials", '<circle cx="10" cy="10" r="8" fill="#ddd"/><path d="M3 6l5-4 4 4-4 4zM12 10l5-3v7l-4 3zM5 13l5 1-1 4z" fill="#222"/>' + tri],
  ["", "View options", '<path d="M1 5q10 0 17 10-12 2-12-8" fill="none" stroke="#ccc" stroke-width="2"/><circle cx="10" cy="9" r="2" fill="#ddd"/>'],
  ["", "Camera options", '<path d="M1 9h9v9H1z" fill="#bbb"/><path d="M4 4q10 0 15 9-9 1-10-7" fill="none" stroke="#ccc" stroke-width="2"/>'],
  ["gap2", "Points", '<circle cx="9" cy="10" r="3" fill="#eee"/>'],
  ["", "Point normals", '<circle cx="6" cy="13" r="3" fill="#eee"/><path d="M6 13l11-7" stroke="#ccc"/>'],
  ["", "Point trails", '<path d="M4 15l5-4M9 11l7-6" stroke="#ddd" stroke-width="4"/>'],
  ["", "Point numbers", '<circle cx="4" cy="15" r="3" fill="#eee"/><text x="6" y="12">12</text>'],
  ["", "Primitive normals", '<path d="M1 15l5-8 12 3-3 7z" fill="#ccc"/><path d="M12 11V3" stroke="#ddd" stroke-width="2"/>'],
  ["", "Primitive numbers", '<path d="M1 17l5-6 12 3-3 4z" fill="#ccc"/><text x="6" y="12">12</text>'],
  ["", "Hulls", '<path d="M3 19V2h15M3 18L17 3" fill="none" stroke="#999"/><path d="M1 1h4v4H1zM15 1h3v3h-3z" fill="#bbb"/>'],
  ["", "Point groups", '<path d="M4 4h12v12H4z" fill="#666"/><path d="M1 1h4v4H1zM15 1h4v4h-4zM1 15h4v4H1zM15 15h4v4h-4z" fill="#ccc"/>'],
  ["", "Vectors", '<path d="M1 10h9l6-6M10 10l6 7" stroke="#ddd" stroke-width="2" fill="none"/><circle cx="10" cy="10" r="3" fill="#eee"/>'],
  ["", "Visualizers", '<circle cx="10" cy="10" r="9" fill="none" stroke="#999"/><path d="M5 6h10v8H5z" fill="#eee"/>'],
  ["", "Labels", '<text x="0" y="14">abc</text>'],
  ["on", "Background image", '<path d="M1 3h18v14H1z" fill="#ddd"/><path d="M3 14l5-5 5 4 4-5v7H3z" fill="#333"/>'],
  ["gap on", "Snapshots", '<circle cx="10" cy="8" r="6" fill="none" stroke="#ddd" stroke-width="2"/><path d="M8 12h5l-2 6z" fill="#ddd"/>' + tri],
  ["last", "Info", '<circle cx="10" cy="10" r="8" fill="none" stroke="#ccc" stroke-width="1.500"/><path d="M10 5v2M10 9v6" stroke="#ccc" stroke-width="2"/>'],
  ["on", "Layout", '<path d="M1 1h18v18H1z" fill="#d8a520"/><path d="M3 3h6v6H3zM11 3h6v6h-6zM3 11h6v6H3zM11 11h6v6h-6z" fill="#eee"/>'],
  ["", "Display options", '<path d="M1 2h18v16H1z" fill="#eee"/><path d="M2 10q8-9 16 0-8 7-16 0z" fill="#222"/><circle cx="10" cy="10" r="2" fill="#eee"/>']
];
const sideButtons = list => list.map(b => `<button class="${b[0]}" aria-label="${b[1]}">${svg(b[2])}</button>`).join("");
$("side-left").innerHTML = sideButtons(left);
$("side-right").innerHTML = sideButtons(right);

// ground grid, projected through the four corners of the unit square
function projector(p) {
  const [[x0, y0], [x1, y1], [x2, y2], [x3, y3]] = p;
  const dx1 = x1 - x2, dx2 = x3 - x2, dy1 = y1 - y2, dy2 = y3 - y2;
  const sx = x0 - x1 + x2 - x3, sy = y0 - y1 + y2 - y3;
  const det = dx1 * dy2 - dx2 * dy1;
  const g = (sx * dy2 - dx2 * sy) / det, h = (dx1 * sy - sx * dy1) / det;
  return (u, v) => {
    const s = (u + 1) / 2, t = (v + 1) / 2, w = g * s + h * t + 1;
    if (w < 0.15) return null;
    return [((x1 - x0 + g * x1) * s + (x3 - x0 + h * x3) * t + x0) / w, ((y1 - y0 + g * y1) * s + (y3 - y0 + h * y3) * t + y0) / w];
  };
}
const project = projector([[329, 372], [746, 234], [965, 599], [492, 788]]);
function gridLine(fn) {
  let d = "", pen = "M";
  for (let k = -5; k <= 5; k += 0.5) {
    const pt = fn(k);
    if (!pt) { pen = "M"; continue; }
    d += pen + pt[0].toFixed(1) + " " + pt[1].toFixed(1);
    pen = "L";
  }
  return d;
}
let minor = "", major = "";
for (let i = -25; i <= 25; i++) {
  const a = i / 5;
  const d = gridLine(k => project(a, k)) + gridLine(k => project(k, a));
  if (i % 5) minor += d; else major += d;
}
$("grid-minor").setAttribute("d", minor);
$("grid-major").setAttribute("d", major);

// sliders
document.querySelectorAll("input[type=range]").forEach(r => {
  const paint = () => r.style.setProperty("--fill", (r.value - r.min) / (r.max - r.min) * 100 + "%");
  r.addEventListener("input", paint);
  paint();
});

// timeline ticks, one every 6 frames
for (let f = 12; f <= 240; f += 6) {
  const t = document.createElement("div");
  t.className = f % 24 ? "tick" : "tick major";
  t.style.left = (f - 1) / 239 * 100 + "%";
  if (f % 24 === 0) t.innerHTML = `<span>${f}</span>`;
  $("timeline").appendChild(t);
}

// taskbar, 24x24
const tile = (bg, fg, t, cls = "heavy") => `<rect width="24" height="24" fill="${bg}"/><text class="${cls}" x="12" y="18" fill="${fg}">${t}</text>`;
const swirl = '<rect width="24" height="24" fill="#f26a21"/><path d="M0 9C5 2 20 3 20 13c0 9-13 9-13 1 0-5 8-5 7 0M0 15c1 4 3 7 7 9" fill="none" stroke="#3a2a20" stroke-width="2.500"/>';
const apps = [
  ["", "Start", '<path d="M4 5.500l7-1v7H4zM12 4.300l8-1.100v8.300h-8zM4 12.500h7v7l-7-1zM12 12.500h8v8.300l-8-1.100z" fill="#fff"/>'],
  ["", "Search", '<circle cx="14" cy="10" r="6" fill="none" stroke="#fff" stroke-width="1.500"/><path d="M10 14l-6 6" stroke="#fff" stroke-width="1.500"/>'],
  ["", "Cortana", '<circle cx="12" cy="12" r="7" fill="none" stroke="#fff" stroke-width="2"/>'],
  ["run", "Explorer", '<path d="M2 3h7l2 3h11v16H2z" fill="#e9b93c"/><path d="M2 9h20v11H2z" fill="#f8d775"/><path d="M5 21v-7h14v7h-4v-3H9v3z" fill="#3b8ed0"/>'],
  ["", "Edge", '<path d="M2 12C3-2 23-2 22 14H9q1 7 12 4v4Q2 28 4 14 5 8 10 6 3 7 2 12zM9 10h7q0-5-4-5t-3 5z" fill="#1878d0"/>'],
  ["", "Brave", '<path d="M5 2h14l3 4-1 10-9 7-9-7L2 6z" fill="#f04e23"/><path d="M6 7l6-2 6 2-2 5 1 3-5 4-5-4 1-3z" fill="#fff"/><path d="M8 10l3 1M16 10l-3 1M12 11v4M10 16h4" stroke="#f04e23"/>'],
  ["run", "Chrome", '<circle cx="12" cy="12" r="11" fill="#3fa653"/><path d="M2 7a11 11 0 0 1 20 0H12a5 5 0 0 0-5 6z" fill="#de4a3c"/><path d="M22 7a11 11 0 0 1-11 16l5-9a5 5 0 0 0-1-7z" fill="#f5cf3c"/><circle cx="12" cy="12" r="5" fill="#4688f0" stroke="#fff" stroke-width="1.500"/>'],
  ["", "Firefox", '<circle cx="12" cy="13" r="10" fill="#f5652a"/><path d="M13 0q10 6 9 15-2 6-9 7 6-6 2-11-5-2-2-11z" fill="#fcc33c"/><circle cx="11" cy="13" r="5" fill="#7a3bc8"/>'],
  ["", "VLC", '<path d="M10 1h4l5 17H5z" fill="#f08a1c"/><path d="M8 8h8l1 4H7z" fill="#eee"/><path d="M3 17h18l2 6H1z" fill="#e87a10"/>'],
  ["", "Finder", '<circle cx="14" cy="10" r="7" fill="none" stroke="#f07a1c" stroke-width="4"/><path d="M9 14l-7 8" stroke="#f07a1c" stroke-width="4"/>'],
  ["", "Snip", '<ellipse cx="11" cy="9" rx="11" ry="8" fill="#e8e0e4" transform="rotate(-30 11 9)"/><ellipse cx="11" cy="8" rx="7" ry="3" fill="none" stroke="#c34" transform="rotate(-30 11 9)"/><path d="M12 12l6 7M18 11l-4 9" stroke="#3aa0c0" stroke-width="2"/><circle cx="13" cy="21" r="2" fill="none" stroke="#3aa0c0" stroke-width="2"/><circle cx="20" cy="20" r="2" fill="none" stroke="#3aa0c0" stroke-width="2"/>'],
  ["", "Daz Studio", '<text x="12" y="18" fill="#b5ae50">DS</text>'],
  ["", "IM", '<rect x="1" y="1" width="22" height="22" fill="#999"/><rect x="4" y="4" width="16" height="16" fill="#bbb" stroke="#333"/><text class="small heavy" x="12" y="16" fill="#333">IM</text>'],
  ["", "Marvelous", '<rect width="24" height="24" fill="#e8344e"/><path d="M5 18V7h14v11M12 7v8" fill="none" stroke="#fff" stroke-width="3.500"/>'],
  ["", "Camtasia", '<rect width="24" height="24" fill="#5ea80c"/><path d="M19 6h-8q-5 0-5 6t5 6h8" fill="none" stroke="#fff" stroke-width="4"/>'],
  ["run", "Camtasia Recorder", '<rect width="24" height="24" fill="#f25a4e"/><path d="M19 6h-8q-5 0-5 6t5 6h8" fill="none" stroke="#fff" stroke-width="4"/>'],
  ["", "Mari", '<path d="M5 19V5l7 9 7-9v14M8 5l4 14 4-14" fill="none" stroke="#e0c81c" stroke-width="2"/>'],
  ["", "ZBrush", '<rect width="24" height="24" fill="#ddd"/><circle cx="14" cy="5" r="2.500" fill="#222"/><path d="M4 9l9 0-2 6-7 5M11 15l7 5M13 9l6 4" fill="none" stroke="#222" stroke-width="2.500"/>'],
  ["", "Blender", '<path d="M2 16L12 4M4 9h10" stroke="#ec8a1c" stroke-width="3"/><circle cx="14" cy="14" r="8" fill="#ec8a1c"/><circle cx="14" cy="14" r="5" fill="#fff"/><circle cx="14" cy="14" r="3" fill="#285a9c"/>'],
  ["", "Office", '<path d="M4 5l9-4 7 3v16l-7 3-9-4 10 1V5L8 7v10l-4 2z" fill="#d83a1c"/>'],
  ["", "Houdini", swirl],
  ["", "Sculptor", '<path d="M12 1l3 6 6-2-2 6 4 4-6 2-2 6-4-5-7 2 3-6-5-4 7-2z" fill="#777"/><circle cx="12" cy="12" r="4" fill="#2a2a2a"/>'],
  ["", "Photoshop", '<rect x="1" y="1" width="22" height="22" rx="3" fill="#0a1e2e" stroke="#31b8e8" stroke-width="2"/><text class="small heavy" x="12" y="16" fill="#fff">Ps</text>'],
  ["", "Substance", '<path d="M12 2l11 20H1z" fill="#dca028"/><text class="small heavy" x="12" y="20" fill="#23211f">S</text>'],
  ["", "Substance Painter", '<circle cx="11" cy="13" r="10" fill="#d8284c"/><circle cx="21" cy="22" r="2" fill="#d8284c"/><path d="M9 0h3v5H9z" fill="#d8284c"/><text class="heavy" x="11" y="19" fill="#fff">S</text>'],
  ["", "Bridge", tile("#1e9af0", "#fff", "B")],
  ["run now", "Houdini FX", swirl],
  ["run", "Player", '<rect width="24" height="24" fill="#fbb80c"/><path d="M3 6h18v11H3zM7 19h10" fill="#5c5c5c" stroke="#5c5c5c"/><path d="M10 8l5 4-5 3z" fill="#fbb80c"/>']
];
$("apps").innerHTML = apps.map(a => `<button class="${a[0]}" aria-label="${a[1]}">${svg(a[2], "0 0 24 24")}</button>`).join("");
```
